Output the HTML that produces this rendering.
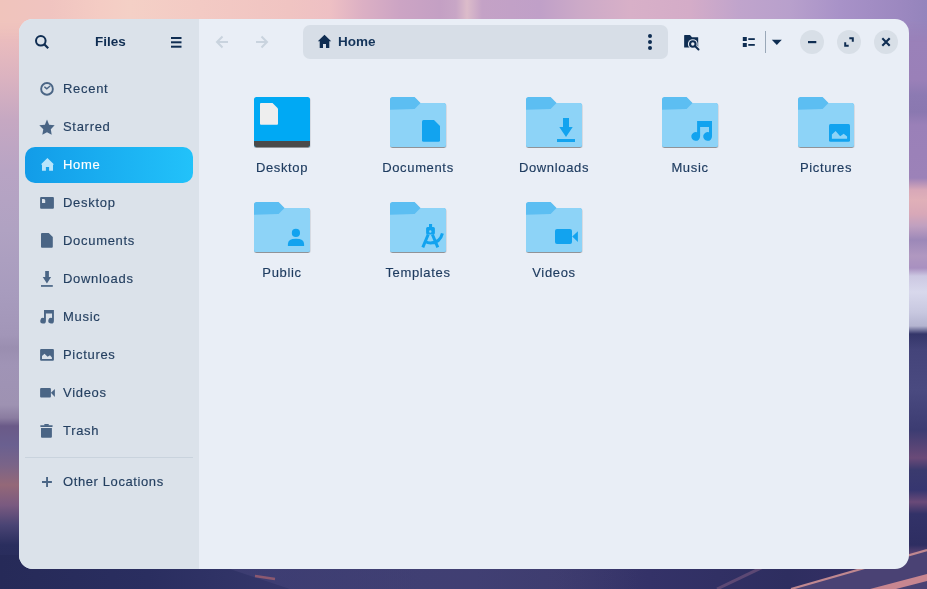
<!DOCTYPE html>
<html><head><meta charset="utf-8">
<style>
*{margin:0;padding:0;box-sizing:border-box}
html,body{width:927px;height:589px;overflow:hidden}
body{position:relative;font-family:"Liberation Sans",sans-serif;background:#5a4a7a}
#wp{position:absolute;left:0;top:0;width:927px;height:589px;overflow:hidden}
#win{position:absolute;left:19px;top:19px;width:890px;height:550px;border-radius:14px;overflow:hidden;background:#e9eef6}
#side{position:absolute;left:0;top:0;width:180px;height:550px;background:#dbe2ea}
.abs{position:absolute}
.st{position:absolute;white-space:nowrap;color:#243f60;font-size:13px;line-height:15px;letter-spacing:0.7px;will-change:transform;-webkit-text-stroke:0.15px currentColor}
.lbl{position:absolute;width:120px;text-align:center;white-space:nowrap;color:#1f3c60;font-size:13px;line-height:15px;letter-spacing:0.65px;will-change:transform;-webkit-text-stroke:0.15px currentColor}
</style></head><body>
<div id="wp">
<div class="abs" style="left:0;top:0;width:32px;height:589px;background:linear-gradient(180deg,#f0c4bc 0px,#eabcbe 40px,#dab2c0 80px,#c6a8c2 120px,#b8a4c4 170px,#b0a2c2 230px,#a89cbe 290px,#a296b8 335px,#9a8eb0 348px,#a094b6 365px,#9e92b2 405px,#8a7ca0 418px,#6a5a88 426px,#6a6090 445px,#7a6488 465px,#946878 485px,#7a5a80 505px,#4a4474 525px,#2a2e5e 545px,#262a58 589px)"></div>
<div class="abs" style="left:895px;top:0;width:32px;height:589px;background:linear-gradient(180deg,#9a82ba 0px,#9a80b8 80px,#8c7ab2 95px,#8a78b0 112px,#9a80b8 125px,#9c82b8 178px,#d8a8b8 190px,#e0b0b8 200px,#d8a8b8 214px,#c0a0c0 226px,#9c88b8 240px,#b098c0 256px,#a890c0 268px,#ccc8e2 276px,#d8d8ec 292px,#c8c8e0 312px,#b4b4d0 326px,#34366a 334px,#44447a 350px,#4a4a80 390px,#3c3c72 430px,#6a4a78 458px,#3a3a6e 470px,#363670 490px,#6a4a78 502px,#323268 514px,#2e2e62 545px,#7a5280 560px,#3a3068 572px,#b07888 589px)"></div><div class="abs" style="left:0;top:0;width:927px;height:42px;-webkit-mask-image:linear-gradient(180deg,#000 20px,transparent 42px);background:linear-gradient(90deg,#f0c4bc 0px,#f0c4c0 50px,#f4ccc4 100px,#f4d0c6 130px,#f3cac4 200px,#f0c4c2 290px,#eec0c4 330px,#dcb0c4 362px,#cca4c4 400px,#c4a0c4 440px,#c8a6c6 456px,#dcbcca 467px,#c4a2c6 482px,#c0a0c8 540px,#ccaac8 580px,#d8b0c8 630px,#d4acc8 690px,#c0a4cc 740px,#b8a0cc 790px,#a892c8 840px,#9c88c0 900px,#9484bc 927px)"></div>
<svg class="abs" style="left:0;top:555px" width="927" height="34" viewBox="0 555 927 34">
<defs><linearGradient id="bg1" x1="0" x2="1" y1="0" y2="0"><stop offset="0" stop-color="#262a58"/><stop offset="0.16" stop-color="#2a2e60"/><stop offset="0.3" stop-color="#34366a"/><stop offset="0.45" stop-color="#3a3a6c"/><stop offset="0.6" stop-color="#3c3a6c"/><stop offset="0.7" stop-color="#343268"/><stop offset="0.85" stop-color="#2e2e60"/><stop offset="1" stop-color="#3a3068"/></linearGradient></defs>
<rect x="0" y="555" width="927" height="34" fill="url(#bg1)"/>
<linearGradient id="bg2" x1="0" x2="1" y1="0" y2="0"><stop offset="0" stop-color="#46447a" stop-opacity="0.55"/><stop offset="0.6" stop-color="#46447a" stop-opacity="0.5"/><stop offset="1" stop-color="#46447a" stop-opacity="0"/></linearGradient><path d="M230 569L640 569L640 589L290 589Z" fill="url(#bg2)"/><path d="M255 576L275 579" stroke="#a06070" stroke-width="2.5" opacity="0.8"/><path d="M717 589L765 566" stroke="#7a5a80" stroke-width="3" opacity="0.6"/>
</svg>
<svg class="abs" style="left:600px;top:480px" width="327" height="109" viewBox="600 480 327 109">
<path d="M791 589L927 550V589Z" fill="#4a4274"/>
<path d="M791 589L927 550" stroke="#c08890" stroke-width="2.2"/>
<path d="M870 589L927 574V581L896 589Z" fill="#c88690"/>
</svg>

</div>
<div id="win">
  <div id="side"></div>
</div>
<svg width="0" height="0" style="position:absolute"><defs><filter id="fsh" x="-10%" y="-10%" width="120%" height="130%"><feDropShadow dx="0.2" dy="0.9" stdDeviation="0.5" flood-color="#000" flood-opacity="0.42"/></filter></defs></svg>
<!-- sidebar header -->
<svg class="abs" style="left:34px;top:34px" width="16" height="16" viewBox="0 0 16 16"><circle cx="6.8" cy="6.8" r="4.8" stroke="#0f2d52" stroke-width="2" fill="none"/><path d="M10.2 10.2L14.2 14.2" stroke="#0f2d52" stroke-width="2.2"/></svg>
<div class="abs" style="left:95px;top:34px;font-size:13.5px;line-height:15px;font-weight:bold;color:#0f2d52;white-space:nowrap;will-change:transform">Files</div>
<svg class="abs" style="left:171px;top:37px" width="11" height="11" viewBox="0 0 11 11"><rect x="0" y="0" width="10.5" height="2" fill="#0f2d52"/><rect x="0" y="4.3" width="10.5" height="2" fill="#0f2d52"/><rect x="0" y="8.7" width="10.5" height="2" fill="#0f2d52"/></svg>
<div class="abs" style="left:25px;top:147px;width:168px;height:36px;border-radius:10px;background:linear-gradient(90deg,#129ce8,#22c2fa)"></div>
<svg class="abs" style="left:40px;top:82px;overflow:visible" width="17" height="17" viewBox="0 0 17 17"><circle cx="7" cy="6.9" r="5.85" stroke="#4a6585" stroke-width="1.9" fill="none"/><path d="M4.8 5.1L6.8 6.8L9.8 4.2" stroke="#4a6585" stroke-width="1.4" fill="none" stroke-linecap="round"/></svg><div class="st" style="left:63px;top:81px;color:#243f60">Recent</div><svg class="abs" style="left:39px;top:119px;overflow:visible" width="17" height="17" viewBox="0 0 17 17"><path d="M8 0.5L10.1 5.7L15.7 6.3L11.8 10.2L12.7 15.8L8 13.2L3.3 15.8L4.3 10.2L0.3 6.3L5.9 5.7Z" fill="#4a6585"/></svg><div class="st" style="left:63px;top:119px;color:#243f60">Starred</div><svg class="abs" style="left:40px;top:157px;overflow:visible" width="17" height="17" viewBox="0 0 17 17"><path d="M7.4 1L14.1 7.4H13V13.7H9.1V10H5.9V13.7H2V7.4H0.8Z" fill="#b9e5fb"/></svg><div class="st" style="left:63px;top:157px;color:#ffffff">Home</div><svg class="abs" style="left:40px;top:197px;overflow:visible" width="17" height="17" viewBox="0 0 17 17"><path d="M1.1 0H12.9Q13.9 0 13.9 1V10.7Q13.9 11.7 12.9 11.7H1.1Q0.1 11.7 0.1 10.7V1Q0.1 0 1.1 0ZM2 2V6.1H5.2V3L4.2 2Z" fill="#4a6585" fill-rule="evenodd"/></svg><div class="st" style="left:63px;top:195px;color:#243f60">Desktop</div><svg class="abs" style="left:40px;top:232px;overflow:visible" width="17" height="17" viewBox="0 0 17 17"><path d="M2 0.9H8.7L12.8 5V14.7Q12.8 15.7 11.8 15.7H2Q1 15.7 1 14.7V1.9Q1 0.9 2 0.9Z" fill="#4a6585"/></svg><div class="st" style="left:63px;top:233px;color:#243f60">Documents</div><svg class="abs" style="left:40px;top:270px;overflow:visible" width="17" height="17" viewBox="0 0 17 17"><path d="M5.2 0.9H8.9V7.1H11.1L6.95 13.4L2.7 7.1H5.2Z" fill="#4a6585"/><rect x="1" y="15.1" width="11.8" height="1.7" fill="#4a6585"/></svg><div class="st" style="left:63px;top:271px;color:#243f60">Downloads</div><svg class="abs" style="left:40px;top:309px;overflow:visible" width="17" height="17" viewBox="0 0 17 17"><path d="M4 1H13.9V11.7A2.8 2.8 0 1 1 12.06 9.1V4.4H5.9V11.7A2.8 2.8 0 1 1 4 9.1Z" fill="#4a6585"/></svg><div class="st" style="left:63px;top:309px;color:#243f60">Music</div><svg class="abs" style="left:40px;top:349px;overflow:visible" width="17" height="17" viewBox="0 0 17 17"><path d="M1.1 0H12.9Q13.9 0 13.9 1V10.7Q13.9 11.7 12.9 11.7H1.1Q0.1 11.7 0.1 10.7V1Q0.1 0 1.1 0ZM2 9.9H11.9V8.6L10 6.3L7.6 7.8L4.5 4.8L2 7Z" fill="#4a6585" fill-rule="evenodd"/></svg><div class="st" style="left:63px;top:347px;color:#243f60">Pictures</div><svg class="abs" style="left:40px;top:388px;overflow:visible" width="17" height="17" viewBox="0 0 17 17"><rect x="0.1" y="0" width="10.8" height="9.5" rx="1" fill="#4a6585"/><path d="M10.9 4.75L14.9 1V8.9Z" fill="#4a6585"/></svg><div class="st" style="left:63px;top:385px;color:#243f60">Videos</div><svg class="abs" style="left:40px;top:424px;overflow:visible" width="17" height="17" viewBox="0 0 17 17"><rect x="4.2" y="0" width="4.7" height="1.8" rx="0.8" fill="#4a6585"/><rect x="0.1" y="1.2" width="12.7" height="1.7" rx="0.8" fill="#4a6585"/><path d="M1 4H11.9V12.7Q11.9 13.7 10.9 13.7H2Q1 13.7 1 12.7Z" fill="#4a6585"/></svg><div class="st" style="left:63px;top:423px;color:#243f60">Trash</div><svg class="abs" style="left:40px;top:476px" width="14" height="14" viewBox="0 0 14 14"><path d="M6.1 1H8V5.1H11.9V7H8V10.9H6.1V7H2V5.1H6.1Z" fill="#4a6585"/></svg><div class="st" style="left:63px;top:474px;letter-spacing:0.6px">Other Locations</div>
<div class="abs" style="left:25px;top:457px;width:168px;height:1px;background:#c9d3dd"></div>
<!-- toolbar -->
<svg class="abs" style="left:214px;top:34px" width="16" height="16" viewBox="0 0 16 16"><path d="M14 8H3.5M8.5 2.5L3 8L8.5 13.5" stroke="#c9d3de" stroke-width="2" fill="none"/></svg>
<svg class="abs" style="left:254px;top:34px" width="16" height="16" viewBox="0 0 16 16"><path d="M2 8H12.5M7.5 2.5L13 8L7.5 13.5" stroke="#c9d3de" stroke-width="2" fill="none"/></svg>
<div class="abs" style="left:303px;top:25px;width:365px;height:34px;border-radius:7px;background:#d7dee7"></div>
<svg class="abs" style="left:317px;top:34px" width="15" height="15" viewBox="0 0 15 15"><path d="M7.5 0.8L14.2 7.2H12.3V14H9V10H6V14H2.7V7.2H0.8Z" fill="#0f2d52"/></svg>
<div class="abs" style="left:338px;top:34px;font-size:13.5px;line-height:15px;font-weight:bold;color:#14345a;white-space:nowrap;will-change:transform">Home</div>
<svg class="abs" style="left:646px;top:32px" width="8" height="20" viewBox="0 0 8 20"><circle cx="4" cy="4" r="2" fill="#0f2d52"/><circle cx="4" cy="10" r="2" fill="#0f2d52"/><circle cx="4" cy="16" r="2" fill="#0f2d52"/></svg>
<svg class="abs" style="left:683px;top:34px" width="18" height="18" viewBox="0 0 18 18"><path d="M1.6 1.1H7L9 3.2H14.8Q15.2 3.2 15.2 3.6V13.2Q15.2 13.6 14.8 13.6H1.6Q1.15 13.6 1.15 13.2V1.5Q1.15 1.1 1.6 1.1Z" fill="#0f2d52"/><circle cx="9.8" cy="10.05" r="4.9" fill="#e9eef6"/><path d="M12.3 12.3L15.6 15.6" stroke="#e9eef6" stroke-width="3.6" stroke-linecap="round"/><circle cx="9.8" cy="10.05" r="2.75" stroke="#0f2d52" stroke-width="2.1" fill="none"/><path d="M12.2 12.2L15.5 15.5" stroke="#0f2d52" stroke-width="2" stroke-linecap="round"/></svg>
<svg class="abs" style="left:742px;top:36px" width="14" height="12" viewBox="0 0 14 12"><rect x="0.8" y="1" width="4" height="4" fill="#0f2d52"/><rect x="6.3" y="2.2" width="6.5" height="1.8" fill="#0f2d52"/><rect x="0.8" y="7" width="4" height="4" fill="#0f2d52"/><rect x="6.3" y="8" width="6.5" height="1.8" fill="#0f2d52"/></svg>
<div class="abs" style="left:765px;top:31px;width:1px;height:22px;background:#9aa8b8"></div>
<svg class="abs" style="left:771px;top:39px" width="12" height="7" viewBox="0 0 12 7"><path d="M0.8 0.8H10.8L5.8 6Z" fill="#0f2d52"/></svg>
<div class="abs" style="left:800px;top:30px;width:24px;height:24px;border-radius:12px;background:#d8dfe7"></div>
<div class="abs" style="left:837px;top:30px;width:24px;height:24px;border-radius:12px;background:#d8dfe7"></div>
<div class="abs" style="left:874px;top:30px;width:24px;height:24px;border-radius:12px;background:#d8dfe7"></div>
<svg class="abs" style="left:800px;top:30px" width="24" height="24" viewBox="0 0 24 24"><rect x="8" y="11" width="8.3" height="2.2" fill="#0f2d52"/></svg>
<svg class="abs" style="left:837px;top:30px" width="24" height="24" viewBox="0 0 24 24"><path d="M12.3 8.2H15.8V11.7M11.7 15.8H8.2V12.3" stroke="#0f2d52" stroke-width="2" fill="none"/></svg>
<svg class="abs" style="left:874px;top:30px" width="24" height="24" viewBox="0 0 24 24"><path d="M8.3 8.3L15.7 15.7M15.7 8.3L8.3 15.7" stroke="#0f2d52" stroke-width="2.1"/></svg>
<!-- content -->
<div class="abs" style="left:254px;top:97px;width:56px;height:50px"><svg width="56" height="50" viewBox="0 0 56 50" style="overflow:visible">
<g filter="url(#fsh)">
<path d="M2.5 0H53.5Q56 0 56 2.5V47.5Q56 50 53.5 50H2.5Q0 50 0 47.5V2.5Q0 0 2.5 0Z" fill="#03a9f4"/>
</g>
<path d="M0 44H56V47.5Q56 50 53.5 50H2.5Q0 50 0 47.5Z" fill="#4a4a4a"/>
<path d="M7 6H18.5L24 11.5V26.8Q24 27.8 23 27.8H7Q6 27.8 6 26.8V7Q6 6 7 6Z" fill="#eeeeee"/>
</svg></div><div class="lbl" style="left:222px;top:160px">Desktop</div><div class="abs" style="left:388px;top:96px;width:60px;height:54px"><svg width="60" height="54" viewBox="-2 -1 60 54" style="overflow:visible">
<defs></defs>
<g filter="url(#fsh)">
<path d="M0 2.5Q0 0 2.5 0H24.6L30.5 6H53.5Q56 6 56 8.5V47.5Q56 50 53.5 50H2.5Q0 50 0 47.5Z" fill="#5cbef2"/>
</g>
<path d="M0 12.8L24.6 12L30.5 6H53.5Q56 6 56 8.5V47.5Q56 50 53.5 50H2.5Q0 50 0 47.5Z" fill="#8dd3f7"/>
<path d="M33.5 23H44L50 29V43.2Q50 44.7 48.5 44.7H33.5Q32 44.7 32 43.2V24.5Q32 23 33.5 23Z" fill="#12a3ef"/>
</svg></div><div class="lbl" style="left:358px;top:160px">Documents</div><div class="abs" style="left:524px;top:96px;width:60px;height:54px"><svg width="60" height="54" viewBox="-2 -1 60 54" style="overflow:visible">
<defs></defs>
<g filter="url(#fsh)">
<path d="M0 2.5Q0 0 2.5 0H24.6L30.5 6H53.5Q56 6 56 8.5V47.5Q56 50 53.5 50H2.5Q0 50 0 47.5Z" fill="#5cbef2"/>
</g>
<path d="M0 12.8L24.6 12L30.5 6H53.5Q56 6 56 8.5V47.5Q56 50 53.5 50H2.5Q0 50 0 47.5Z" fill="#8dd3f7"/>
<path d="M37 21H43V30H46.7L40 40L33.3 30H37Z" fill="#12a3ef"/><rect x="31" y="42" width="18" height="3" fill="#12a3ef"/>
</svg></div><div class="lbl" style="left:494px;top:160px">Downloads</div><div class="abs" style="left:660px;top:96px;width:60px;height:54px"><svg width="60" height="54" viewBox="-2 -1 60 54" style="overflow:visible">
<defs></defs>
<g filter="url(#fsh)">
<path d="M0 2.5Q0 0 2.5 0H24.6L30.5 6H53.5Q56 6 56 8.5V47.5Q56 50 53.5 50H2.5Q0 50 0 47.5Z" fill="#5cbef2"/>
</g>
<path d="M0 12.8L24.6 12L30.5 6H53.5Q56 6 56 8.5V47.5Q56 50 53.5 50H2.5Q0 50 0 47.5Z" fill="#8dd3f7"/>
<path d="M35.1 24H50V39.3A4.4 4.4 0 1 1 47 35.3V30H38.1V39.3A4.4 4.4 0 1 1 35.1 35.3Z" fill="#12a3ef"/>
</svg></div><div class="lbl" style="left:630px;top:160px">Music</div><div class="abs" style="left:796px;top:96px;width:60px;height:54px"><svg width="60" height="54" viewBox="-2 -1 60 54" style="overflow:visible">
<defs></defs>
<g filter="url(#fsh)">
<path d="M0 2.5Q0 0 2.5 0H24.6L30.5 6H53.5Q56 6 56 8.5V47.5Q56 50 53.5 50H2.5Q0 50 0 47.5Z" fill="#5cbef2"/>
</g>
<path d="M0 12.8L24.6 12L30.5 6H53.5Q56 6 56 8.5V47.5Q56 50 53.5 50H2.5Q0 50 0 47.5Z" fill="#8dd3f7"/>
<path d="M32.5 27H50.5Q52 27 52 28.5V43.2Q52 44.7 50.5 44.7H32.5Q31 44.7 31 43.2V28.5Q31 27 32.5 27Z" fill="#12a3ef"/><path d="M33.9 41.8V37.5L37.6 33.9L42.2 39.3L45.7 36.8L49.1 39.5V41.8Z" fill="#8dd3f7"/>
</svg></div><div class="lbl" style="left:766px;top:160px">Pictures</div><div class="abs" style="left:252px;top:201px;width:60px;height:54px"><svg width="60" height="54" viewBox="-2 -1 60 54" style="overflow:visible">
<defs></defs>
<g filter="url(#fsh)">
<path d="M0 2.5Q0 0 2.5 0H24.6L30.5 6H53.5Q56 6 56 8.5V47.5Q56 50 53.5 50H2.5Q0 50 0 47.5Z" fill="#5cbef2"/>
</g>
<path d="M0 12.8L24.6 12L30.5 6H53.5Q56 6 56 8.5V47.5Q56 50 53.5 50H2.5Q0 50 0 47.5Z" fill="#8dd3f7"/>
<circle cx="41.9" cy="30.9" r="4.1" fill="#12a3ef"/><path d="M33.9 43.9V42Q33.9 36.8 42 36.8Q50.1 36.8 50.1 42V43.9Z" fill="#12a3ef"/>
</svg></div><div class="lbl" style="left:222px;top:265px">Public</div><div class="abs" style="left:388px;top:201px;width:60px;height:54px"><svg width="60" height="54" viewBox="-2 -1 60 54" style="overflow:visible">
<defs></defs>
<g filter="url(#fsh)">
<path d="M0 2.5Q0 0 2.5 0H24.6L30.5 6H53.5Q56 6 56 8.5V47.5Q56 50 53.5 50H2.5Q0 50 0 47.5Z" fill="#5cbef2"/>
</g>
<path d="M0 12.8L24.6 12L30.5 6H53.5Q56 6 56 8.5V47.5Q56 50 53.5 50H2.5Q0 50 0 47.5Z" fill="#8dd3f7"/>
<rect x="39" y="22" width="3.1" height="4" fill="#12a3ef"/><path d="M37.6 24.9H43.4Q44.9 24.9 44.9 26.4V31.1Q44.9 32.6 43.4 32.6H37.6Q36.1 32.6 36.1 31.1V26.4Q36.1 24.9 37.6 24.9ZM40.3 28.3A1.2 1.2 0 1 0 40.3 30.7A1.2 1.2 0 1 0 40.3 28.3Z" fill="#12a3ef" fill-rule="evenodd"/><path d="M38.2 32.5L32.8 45.3M42.4 32.5L47.8 45.3M52.4 31.4Q50.2 40.8 40.5 40.9Q37.6 40.9 35.6 39.8" stroke="#12a3ef" stroke-width="3" fill="none"/>
</svg></div><div class="lbl" style="left:358px;top:265px">Templates</div><div class="abs" style="left:524px;top:201px;width:60px;height:54px"><svg width="60" height="54" viewBox="-2 -1 60 54" style="overflow:visible">
<defs></defs>
<g filter="url(#fsh)">
<path d="M0 2.5Q0 0 2.5 0H24.6L30.5 6H53.5Q56 6 56 8.5V47.5Q56 50 53.5 50H2.5Q0 50 0 47.5Z" fill="#5cbef2"/>
</g>
<path d="M0 12.8L24.6 12L30.5 6H53.5Q56 6 56 8.5V47.5Q56 50 53.5 50H2.5Q0 50 0 47.5Z" fill="#8dd3f7"/>
<rect x="29" y="27" width="17" height="15" rx="2" fill="#12a3ef"/><path d="M46.2 34.6L51.9 29.2V40.1Z" fill="#12a3ef"/>
</svg></div><div class="lbl" style="left:494px;top:265px">Videos</div>
</body></html>
